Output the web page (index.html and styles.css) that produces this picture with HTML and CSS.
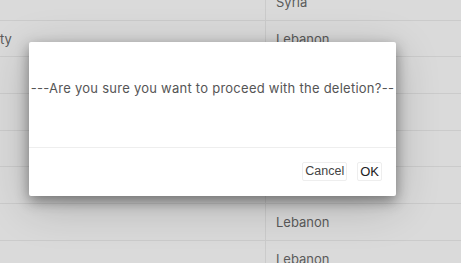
FILE: index.html
```html
<!DOCTYPE html>
<html>
<head>
<meta charset="utf-8">
<link rel="stylesheet" href="styles.css">
</head>
<body>
<div class="table">
  <div class="row"><div class="c1"></div><div class="c2">Syria</div></div>
  <div class="row"><div class="c1">ty</div><div class="c2">Lebanon</div></div>
  <div class="row"><div class="c1"></div><div class="c2"></div></div>
  <div class="row"><div class="c1"></div><div class="c2"></div></div>
  <div class="row"><div class="c1"></div><div class="c2"></div></div>
  <div class="row"><div class="c1"></div><div class="c2"></div></div>
  <div class="row"><div class="c1"></div><div class="c2">Lebanon</div></div>
  <div class="row"><div class="c1"></div><div class="c2">Lebanon</div></div>
</div>
<div class="dialog">
  <div class="dialog-body">---Are you sure you want to proceed with the deletion?--</div>
  <div class="dialog-footer">
    <button class="btn">Cancel</button>
    <button class="btn btn-ok">OK</button>
  </div>
</div>
</body>
</html>
```
FILE: styles.css
```css
html, body {
  margin: 0;
  padding: 0;
  width: 461px;
  height: 263px;
  overflow: hidden;
  background: #dadada;
  font-family: Inter, "Noto Sans", sans-serif;
}
.table {
  margin-top: -16px;
  height: 279px;
  overflow: hidden;
}
.row {
  display: flex;
  height: 36.7px;
  box-sizing: border-box;
  border-bottom: 1px solid #cbcbcb;
  color: #5a5a5a;
  font-size: 13px;
}
.c1 {
  width: 265px;
  border-right: 1px solid #cbcbcb;
  display: flex;
  align-items: center;
  padding-left: 0;
}
.c2 {
  flex: 1;
  display: flex;
  align-items: center;
  padding-left: 10px;
}
.dialog {
  position: absolute;
  left: 29px;
  top: 42px;
  width: 367px;
  height: 154px;
  background: #fff;
  border-radius: 2px;
  box-shadow: 0 10px 45px rgba(0,0,0,0.2), 0 5px 14px rgba(0,0,0,0.4);
  display: flex;
  flex-direction: column;
}
.dialog-body {
  height: 106px;
  box-sizing: border-box;
  padding-top: 38px;
  text-align: center;
  font-size: 13px;
  letter-spacing: 0.25px;
  line-height: 16px;
  color: #555;
  white-space: nowrap;
  border-bottom: 1px solid #eeeeee;
}
.dialog-footer {
  flex: 1;
  display: flex;
  justify-content: flex-end;
  align-items: center;
  gap: 10px;
  padding-right: 14px;
  padding-bottom: 2px;
}
.btn {
  font-family: "Liberation Sans", Arial, sans-serif;
  font-size: 12.5px;
  color: #444;
  background: #fff;
  border: 1px solid #eeeeee;
  border-radius: 2px;
  height: 19px;
  padding: 0 2px;
  margin: 0;
  line-height: 17px;
}
.btn-ok {
  font-size: 13px;
  color: #222;
}
```
